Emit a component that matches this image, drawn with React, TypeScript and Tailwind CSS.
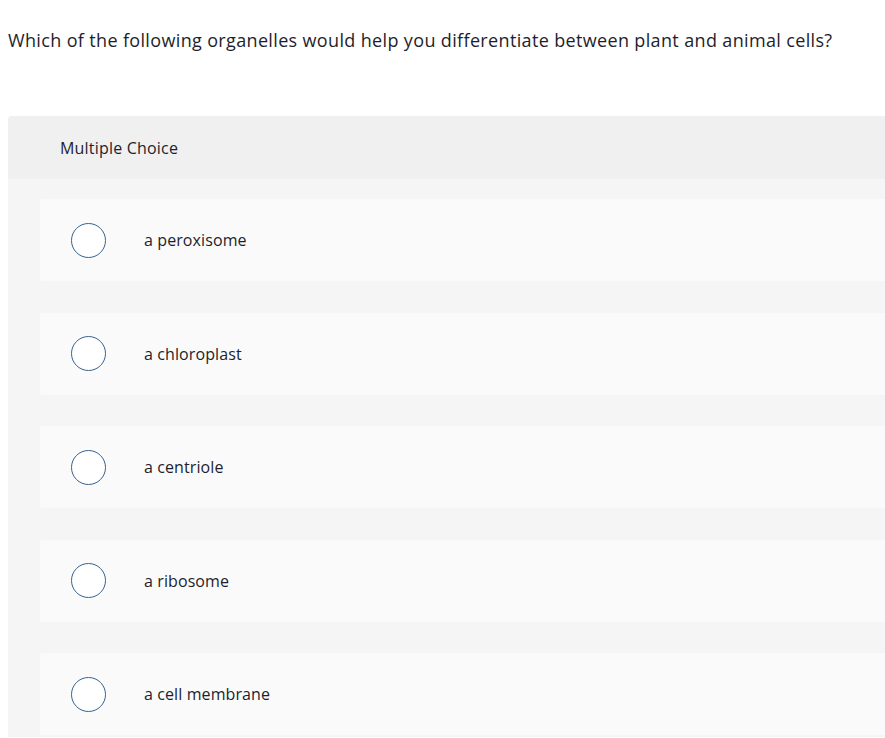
import React from "react";

const options = ["a peroxisome", "a chloroplast", "a centriole", "a ribosome", "a cell membrane"];

export default function App() {
  return (
    <div className="min-h-[738px] bg-white text-[#1f1f2e]" style={{ fontFamily: '"Open Sans", Arial, sans-serif' }}>
      <p className="pl-[8px] pt-[28px] text-[18px] leading-[24px] tracking-[0.35px] text-[#1e1e2c]">
        Which of the following organelles would help you differentiate between plant and animal cells?
      </p>
      <div className="ml-[8px] mt-[64px] rounded-tl-[4px] bg-[#f5f5f5] pb-[2px]">
        <div className="flex h-[63px] items-center rounded-tl-[4px] bg-[#f0f0f0] pl-[52px] text-[16px] tracking-[0.2px] text-[#1e1e2c]">
          Multiple Choice
        </div>
        <div className="flex flex-col gap-[31.5px] pl-[32px] pt-[20px]">
          {options.map((o) => (
            <div key={o} className="flex h-[82px] items-center rounded-l-[3px] bg-[#fafafa]">
              <div className="ml-[31px] h-[35px] w-[35px] rounded-full border-[1.5px] border-[#36638f] bg-white" />
              <span className="ml-[38px] text-[16px] tracking-[0.1px] text-[#1e1e2c]">{o}</span>
            </div>
          ))}
        </div>
      </div>
    </div>
  );
}
